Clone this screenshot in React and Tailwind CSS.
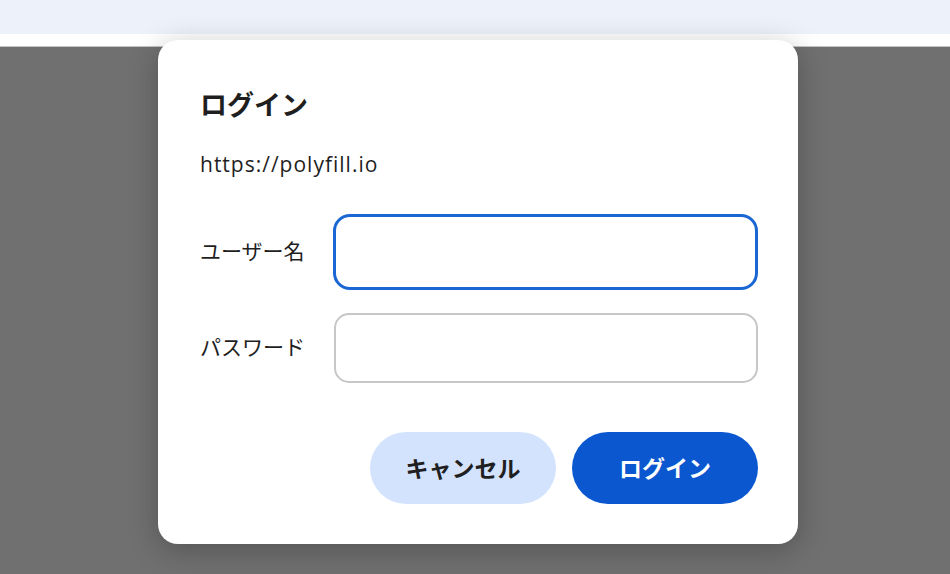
import React from 'react';

const font = { fontFamily: '"Open Sans", "Noto Sans CJK JP", sans-serif' };

const Field = ({ label, focused }) => (
    <div className="flex items-center">
        <label className="w-[134px] shrink-0 text-[21px] text-[#1f1f1f]">{label}</label>
        <div
            className={
                focused
                    ? "-ml-px h-[76px] w-[426px] rounded-[17px] border-[3px] border-[#1a66d2] bg-white"
                    : "h-[70px] w-[424px] rounded-[15px] border-2 border-[#c7c7c7] bg-white"
            }
        />
    </div>
);

const App = () => {
    return (
        <div className="relative h-[574px] w-[950px] overflow-hidden" style={font}>
            <div className="h-[34px] bg-[#edf2fa]" />
            <div className="h-[12px] bg-white" />
            <div className="h-px bg-[#c4c4c4]" />
            <div className="h-[527px] bg-[#707070]" />

            <div className="absolute left-[158px] top-[40px] flex h-[504px] w-[640px] flex-col rounded-[20px] bg-white pl-[42px] pr-[40px] pt-[48px] pb-[40px] shadow-[0_6px_30px_rgba(0,0,0,0.25)]">
                <h1 className="text-[27px] font-bold leading-[34px] text-[#1f1f1f]">ログイン</h1>
                <p className="mt-[29px] text-[21px] leading-[26px] tracking-[1px] text-[#1f1f1f]">https://polyfill.io</p>

                <div className="mt-[37px] flex flex-col gap-[23px]">
                    <Field label="ユーザー名" focused />
                    <Field label="パスワード" />
                </div>

                <div className="mt-auto flex justify-end gap-4">
                    <button className="h-[72px] w-[186px] rounded-full bg-[#d3e3fd] text-[23px] font-bold text-[#1f1f1f]">
                        キャンセル
                    </button>
                    <button className="h-[72px] w-[186px] rounded-full bg-[#0b57d0] text-[23px] font-bold text-white">
                        ログイン
                    </button>
                </div>
            </div>
        </div>
    );
};

export default App;
